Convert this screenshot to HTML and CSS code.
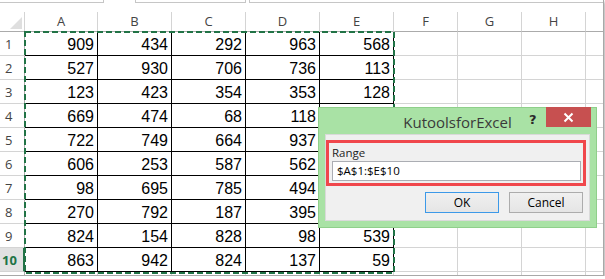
FILE: index.html
```html
<!DOCTYPE html>
<html>
<head>
<meta charset="utf-8">
<link rel="stylesheet" href="styles.css">
</head>
<body>
<div class="window">
  <div class="topbar">
    <div class="namebox"></div>
    <div class="fxbox"></div>
    <div class="formula"></div>
  </div>
  <div class="grid">
    <div class="corner"><svg width="14" height="14" viewBox="0 0 14 14"><polygon points="14,2 14,14 2,14" fill="#dfdfdf"/></svg></div>
    <div class="ch">A</div><div class="ch">B</div><div class="ch">C</div><div class="ch">D</div><div class="ch">E</div><div class="ch">F</div><div class="ch">G</div><div class="ch">H</div><div class="ch last"></div>

    <div class="rh">1</div><div class="c">909</div><div class="c">434</div><div class="c">292</div><div class="c">963</div><div class="c e">568</div><div class="g"></div><div class="g"></div><div class="g"></div><div class="g last"></div>
    <div class="rh">2</div><div class="c">527</div><div class="c">930</div><div class="c">706</div><div class="c">736</div><div class="c e">113</div><div class="g"></div><div class="g"></div><div class="g"></div><div class="g last"></div>
    <div class="rh">3</div><div class="c">123</div><div class="c">423</div><div class="c">354</div><div class="c">353</div><div class="c e">128</div><div class="g"></div><div class="g"></div><div class="g"></div><div class="g last"></div>
    <div class="rh">4</div><div class="c">669</div><div class="c">474</div><div class="c">68</div><div class="c">118</div><div class="c e"></div><div class="g"></div><div class="g"></div><div class="g"></div><div class="g last"></div>
    <div class="rh">5</div><div class="c">722</div><div class="c">749</div><div class="c">664</div><div class="c">937</div><div class="c e"></div><div class="g"></div><div class="g"></div><div class="g"></div><div class="g last"></div>
    <div class="rh">6</div><div class="c">606</div><div class="c">253</div><div class="c">587</div><div class="c">562</div><div class="c e"></div><div class="g"></div><div class="g"></div><div class="g"></div><div class="g last"></div>
    <div class="rh">7</div><div class="c">98</div><div class="c">695</div><div class="c">785</div><div class="c">494</div><div class="c e"></div><div class="g"></div><div class="g"></div><div class="g"></div><div class="g last"></div>
    <div class="rh">8</div><div class="c">270</div><div class="c">792</div><div class="c">187</div><div class="c">395</div><div class="c e"></div><div class="g"></div><div class="g"></div><div class="g"></div><div class="g last"></div>
    <div class="rh">9</div><div class="c">824</div><div class="c">154</div><div class="c">828</div><div class="c">98</div><div class="c e">539</div><div class="g"></div><div class="g"></div><div class="g"></div><div class="g last"></div>
    <div class="rh sel">10</div><div class="c">863</div><div class="c">942</div><div class="c">824</div><div class="c">137</div><div class="c e">59</div><div class="g"></div><div class="g"></div><div class="g"></div><div class="g last"></div>

    <div class="t rt"></div><div class="t"></div><div class="t"></div><div class="t"></div><div class="t"></div><div class="t"></div><div class="t"></div><div class="t"></div><div class="t"></div><div class="t last"></div>
  </div>

  <svg class="ants" width="371" height="243" viewBox="0 0 371 243">
    <rect x="1" y="1" width="369" height="241" fill="none" stroke="#217346" stroke-width="2" stroke-dasharray="6 3"/>
  </svg>

  <div class="dialog">
    <div class="titlebar">
      <span class="title">KutoolsforExcel</span>
      <span class="help">?</span>
      <span class="close"><svg width="11" height="11" viewBox="0 0 11 11"><path d="M1.5 1.5 L9.5 9.5 M9.5 1.5 L1.5 9.5" stroke="#fff" stroke-width="2"/></svg></span>
    </div>
    <div class="panel">
      <div class="group">
        <div class="label">Range</div>
        <div class="input">$A$1:$E$10</div>
      </div>
      <div class="buttons">
        <div class="btn primary">OK</div>
        <div class="btn">Cancel</div>
      </div>
    </div>
  </div>
</div>
</body>
</html>
```

FILE: styles.css
```css
html, body {
  margin: 0;
  padding: 0;
  background: #ffffff;
}

.window {
  position: relative;
  width: 603px;
  height: 275px;
  border-right: 1px solid #a8a8a8;
  border-bottom: 1px solid #a8a8a8;
  box-shadow: 1px 2px 3px rgba(0, 0, 0, 0.35);
  background: #ffffff;
  overflow: hidden;
  font-family: "Open Sans", "Noto Sans", sans-serif;
}

.topbar {
  display: flex;
  height: 3px;
}

.namebox {
  width: 103px;
  border-right: 1px solid #c6c6c6;
  border-bottom: 1px solid #c6c6c6;
}

.fxbox {
  margin-left: 31px;
  width: 109px;
  border-left: 1px solid #c6c6c6;
  border-right: 1px solid #c6c6c6;
  border-bottom: 1px solid #c6c6c6;
}

.formula {
  margin-left: 3px;
  flex: 1;
  border-left: 1px solid #c6c6c6;
  border-bottom: 1px solid #c6c6c6;
}

.grid {
  margin-top: 9px;
  display: grid;
  grid-template-columns: 25px 73px 74px 74px 74px 74px 64px 64px 64px 1fr;
  grid-template-rows: 20px repeat(10, 24px) 4px;
}

.corner {
  border-right: 1px solid #d4d4d4;
  border-bottom: 1px solid #ababab;
  display: flex;
  align-items: flex-end;
  justify-content: flex-end;
  padding: 0 2px 2px 0;
  box-sizing: border-box;
}

.ch {
  border-right: 1px solid #d4d4d4;
  border-bottom: 1px solid #ababab;
  font-size: 13px;
  color: #444444;
  text-align: center;
  line-height: 19px;
}

.ch.last, .g.last, .t.last {
  border-right: none;
}

.rh {
  border-right: 1px solid #ababab;
  border-bottom: 1px solid #d4d4d4;
  font-size: 13px;
  color: #444444;
  padding-left: 5px;
  line-height: 25px;
}

.rh.sel {
  background: #e1e1e1;
  color: #217346;
  font-weight: bold;
  padding-left: 2px;
  border-right: 2px solid #217346;
}

.c {
  border-right: 1px solid #000000;
  border-bottom: 1px solid #000000;
  font-family: "Liberation Sans", Arial, sans-serif;
  font-size: 16px;
  color: #000000;
  text-align: right;
  padding-right: 3px;
  line-height: 25px;
}

.g {
  border-right: 1px solid #d4d4d4;
  border-bottom: 1px solid #d4d4d4;
}

.t {
  border-right: 1px solid #d4d4d4;
}

.t.rt {
  border-right: 1px solid #ababab;
}

.ants {
  position: absolute;
  left: 24px;
  top: 31px;
}

.dialog {
  position: absolute;
  left: 318px;
  top: 107px;
  width: 279px;
  height: 121px;
  box-sizing: border-box;
  background: #a9e2a5;
  border: 1px solid #8fcf8a;
  display: flex;
  flex-direction: column;
}

.titlebar {
  position: relative;
  height: 26px;
  display: flex;
  align-items: center;
  justify-content: center;
}

.title {
  font-size: 15px;
  color: #3a3a3a;
  margin-top: 2px;
}

.help {
  position: absolute;
  left: 210px;
  top: 4px;
  font-family: "DejaVu Sans", sans-serif;
  font-weight: bold;
  font-size: 13px;
  color: #2a2a2a;
}

.close {
  position: absolute;
  right: 5px;
  top: -1px;
  width: 45px;
  height: 20px;
  background: #c75050;
  display: flex;
  align-items: center;
  justify-content: center;
}

.panel {
  margin: 0 6px 6px 6px;
  flex: 1;
  background: #f0f0f0;
  border: 1px solid #dadada;
  padding: 5px 6px 0 0;
  display: flex;
  flex-direction: column;
}

.group {
  border: 3px solid #f0474c;
  margin-right: -3px;
  padding: 2px 2px 2px 3px;
  display: flex;
  flex-direction: column;
  gap: 1px;
}

.label {
  font-size: 11.5px;
  color: #1e1e1e;
  line-height: 15px;
}

.input {
  height: 20px;
  box-sizing: border-box;
  background: #ffffff;
  border: 1px solid #abadb3;
  font-size: 11.5px;
  color: #000000;
  padding-left: 4px;
  line-height: 18px;
}

.buttons {
  margin-top: 6px;
  display: flex;
  justify-content: flex-end;
  gap: 10px;
}

.btn {
  width: 74px;
  height: 21px;
  box-sizing: border-box;
  border: 1px solid #acacac;
  background: linear-gradient(#f0f0f0, #e5e5e5);
  font-size: 12px;
  color: #000000;
  text-align: center;
  line-height: 19px;
}

.btn.primary {
  border-color: #3c99e8;
}
```
